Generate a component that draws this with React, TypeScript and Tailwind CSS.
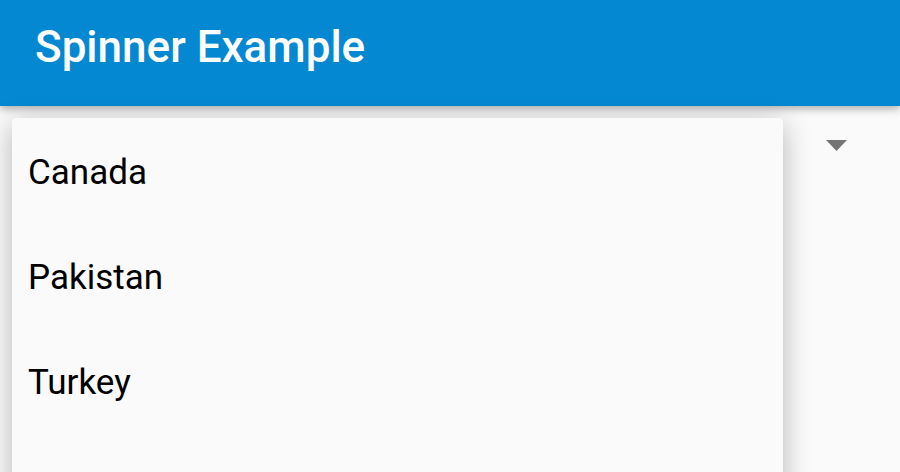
import React from 'react';

const countries = ['Canada', 'Pakistan', 'Turkey'];

const DropArrow: React.FC = () => (
  <svg width="21" height="11" viewBox="0 0 21 11" className="block">
    <path d="M0 0 L21 0 L10.5 11 Z" fill="#757575" />
  </svg>
);

export default function App() {
  return (
    <div
      className="relative h-[472px] w-[900px] overflow-hidden bg-[#fafafa]"
      style={{ fontFamily: 'Roboto, "Noto Sans", sans-serif' }}
    >
      <header className="relative z-10 h-[106px] bg-[#0488d2] pl-[35px] pt-[25px] shadow-[0_3px_8px_rgba(0,0,0,0.3)]">
        <h1 className="text-[44px] font-medium leading-[44px] text-white">Spinner Example</h1>
      </header>

      <div className="flex justify-end pr-[53px] pt-[34px]">
        <DropArrow />
      </div>

      <div className="absolute left-[12px] top-[118px] z-20 h-[400px] w-[771px] rounded-[4px] bg-[#fafafa] pt-[2px] shadow-[0_6px_28px_rgba(0,0,0,0.28)]">
        {countries.map((c) => (
          <div key={c} className="flex h-[105px] items-center pl-[16px]">
            <span className="text-[35px] leading-[35px] text-black">{c}</span>
          </div>
        ))}
      </div>
    </div>
  );
}
